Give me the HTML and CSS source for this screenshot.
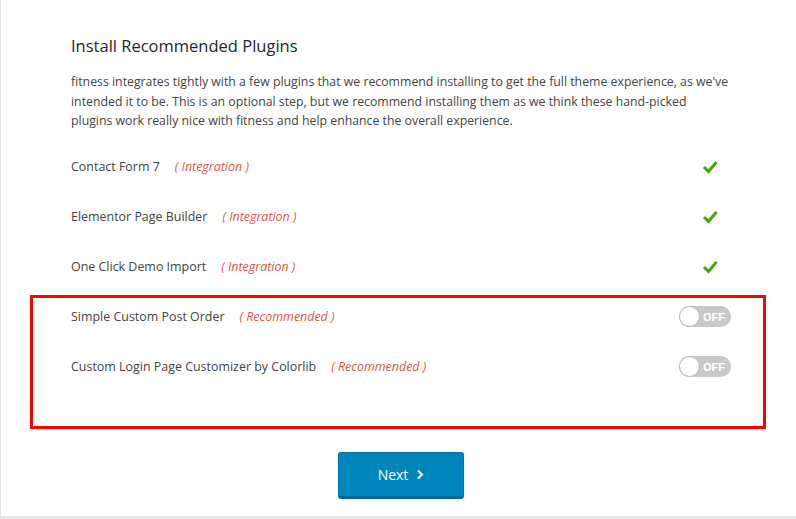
FILE: index.html
```html
<!DOCTYPE html>
<html lang="en">
<head>
<meta charset="utf-8">
<title>Install Recommended Plugins</title>
<link rel="stylesheet" href="styles.css">
</head>
<body>
<div class="panel">
  <h2 class="title">Install Recommended Plugins</h2>
  <p class="intro">fitness integrates tightly with a few plugins that we recommend installing to get the full theme experience, as we've intended it to be. This is an optional step, but we recommend installing them as we think these hand-picked <span class="nw">plugins work</span> really nice with fitness and help enhance the overall experience.</p>
  <ul class="plugins">
    <li class="row"><span class="name">Contact Form 7</span><span class="tag">( Integration )</span><svg class="check" width="16" height="14" viewBox="0 0 16 14"><polyline points="2,7 6.5,11.5 14.5,2" fill="none" stroke="#47a60f" stroke-width="3"/></svg></li>
    <li class="row"><span class="name">Elementor Page Builder</span><span class="tag">( Integration )</span><svg class="check" width="16" height="14" viewBox="0 0 16 14"><polyline points="2,7 6.5,11.5 14.5,2" fill="none" stroke="#47a60f" stroke-width="3"/></svg></li>
    <li class="row"><span class="name">One Click Demo Import</span><span class="tag">( Integration )</span><svg class="check" width="16" height="14" viewBox="0 0 16 14"><polyline points="2,7 6.5,11.5 14.5,2" fill="none" stroke="#47a60f" stroke-width="3"/></svg></li>
  </ul>
  <ul class="plugins highlight">
    <li class="row"><span class="name">Simple Custom Post Order</span><span class="tag">( Recommended )</span><span class="toggle"><span class="knob"></span><span class="off">OFF</span></span></li>
    <li class="row"><span class="name">Custom Login Page Customizer by Colorlib</span><span class="tag">( Recommended )</span><span class="toggle"><span class="knob"></span><span class="off">OFF</span></span></li>
  </ul>
  <div class="actions">
    <button class="next">Next <svg width="8" height="11" viewBox="0 0 8 11"><polyline points="2,1.5 6,5.5 2,9.5" fill="none" stroke="#fff" stroke-width="2"/></svg></button>
  </div>
</div>
</body>
</html>
```

FILE: styles.css
```css
html, body {
  margin: 0;
  padding: 0;
  background: #e6e6e6;
}
body {
  font-family: "Open Sans", "Noto Sans", sans-serif;
  color: #444;
  padding: 0 0 3px 1px;
}
.panel {
  background: #fff;
  height: 516px;
  box-sizing: border-box;
  padding: 33px 65px 0 70px;
}
.title {
  margin: 0;
  font-size: 16.5px;
  font-weight: 500;
  color: #23282d;
  line-height: 26px;
}
.intro {
  margin: 13px 0 0;
  font-size: 12.3px;
  line-height: 19.5px;
  color: #444;
}
.nw { white-space: nowrap; }
.plugins {
  list-style: none;
  margin: 0;
  padding: 0;
}
.plugins:first-of-type {
  margin-top: 26px;
}
.row {
  display: flex;
  align-items: center;
  height: 20px;
  margin-bottom: 30px;
  font-size: 12.45px;
}
.name { color: #444; }
.tag {
  color: #e0563f;
  font-style: italic;
  margin-left: 15px;
}
.check {
  margin-left: auto;
  margin-right: 13px;
}
.highlight {
  border: 3px solid #f00;
  margin: -12px -35px 0 -41px;
  padding: 9px 32px 19px 38px;
}
.toggle {
  margin-left: auto;
  position: relative;
  width: 52px;
  height: 21px;
  border-radius: 11px;
  background: #c9c9c9;
  display: flex;
  align-items: center;
  box-sizing: border-box;
}
.knob {
  width: 19px;
  height: 19px;
  border-radius: 50%;
  background: #fff;
  margin-left: 1px;
  box-shadow: 0 0 0 1px #bdbdbd;
}
.off {
  font-family: "Liberation Sans", Arial, sans-serif;
  font-weight: bold;
  font-size: 11px;
  color: #fff;
  margin-left: 4px;
}
.actions {
  display: flex;
  justify-content: center;
  margin-top: 23px;
}
.next {
  width: 126px;
  height: 47px;
  background: #0085ba;
  border: 1px solid #0073aa;
  border-bottom: 3px solid #006799;
  border-radius: 3px;
  color: #fff;
  font-family: "Open Sans", "Noto Sans", sans-serif;
  font-size: 14px;
  display: flex;
  align-items: center;
  justify-content: center;
  gap: 8px;
  padding: 0;
}
```
